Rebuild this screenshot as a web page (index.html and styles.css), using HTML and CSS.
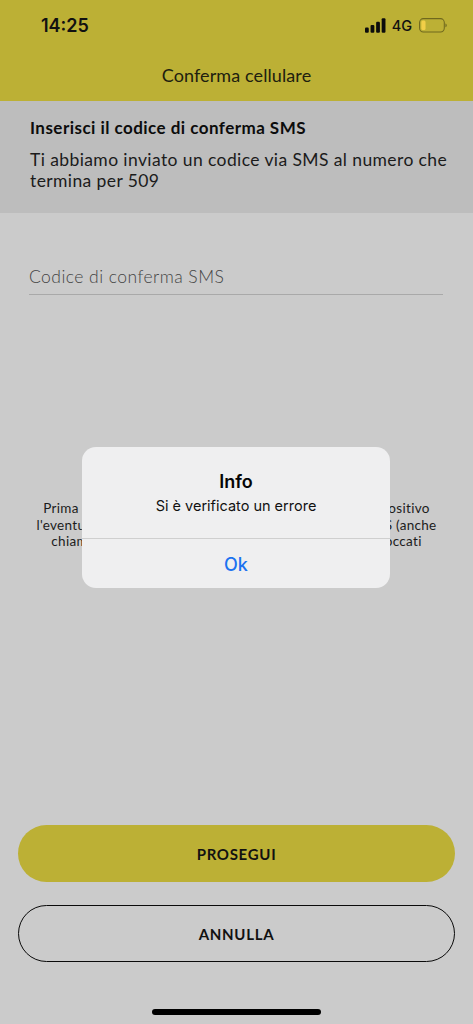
FILE: index.html
```html
<!DOCTYPE html>
<html lang="it">
<head>
<meta charset="utf-8">
<title>Conferma cellulare</title>
<link rel="stylesheet" href="styles.css">
</head>
<body>
<div class="screen">
  <header class="top">
    <div class="status">
      <span class="time">14:25</span>
      <div class="status-right">
        <svg class="signal" width="21" height="15" viewBox="0 0 20 14"><rect x="0" y="9" width="3.6" height="5" rx="1"/><rect x="5.300" y="6.500" width="3.6" height="7.500" rx="1"/><rect x="10.600" y="3.500" width="3.6" height="10.500" rx="1"/><rect x="15.900" y="0" width="3.6" height="14" rx="1"/></svg>
        <span class="net">4G</span>
        <svg class="battery" width="28" height="15" viewBox="0 0 30 15" preserveAspectRatio="none"><rect x="0.600" y="0.600" width="26.500" height="13.400" rx="4" fill="none" stroke="#6f681e" stroke-width="1.100"/><rect x="2.500" y="2.500" width="4.500" height="9.600" rx="1.500" fill="#f2cf48"/><path d="M28.300 5.500c1 .4 1.400 1.100 1.400 1.900s-.4 1.500-1.400 1.900z" fill="#6f681e"/></svg>
      </div>
    </div>
    <h1 class="title">Conferma cellulare</h1>
  </header>

  <section class="intro">
    <h2 class="intro-title">Inserisci il codice di conferma SMS</h2>
    <p class="intro-text">Ti abbiamo inviato un codice via SMS al numero che termina per 509</p>
  </section>

  <div class="field"><span class="placeholder">Codice di conferma SMS</span></div>

  <p class="note">Prima di proseguire controlla sul tuo telefono che il dispositivo<br>l'eventuale ricezione del messaggio di testo fra i tuoi SMS (anche<br>chiamate e messaggi da numeri sconosciuti o anche bloccati</p>

  <div class="actions">
    <button class="btn btn-primary">PROSEGUI</button>
    <button class="btn btn-outline">ANNULLA</button>
  </div>
  <div class="home-wrap"><div class="home"></div></div>

  <div class="dialog">
    <div class="dialog-body">
      <div class="dialog-title">Info</div>
      <div class="dialog-text">Si è verificato un errore</div>
    </div>
    <div class="dialog-action">Ok</div>
  </div>
</div>
</body>
</html>
```
FILE: styles.css
```css
* { box-sizing: border-box; }
html, body { margin: 0; padding: 0; }
body { background: #cbcbcb; font-family: "Lato", "Liberation Sans", sans-serif; color: #111; }
.screen { position: relative; width: 473px; height: 1024px; overflow: hidden; display: flex; flex-direction: column; background: #cbcbcb; }

.top { height: 101px; background: #bcb035; display: flex; flex-direction: column; }
.status { height: 54px; padding: 0 26px 4px 41px; display: flex; align-items: center; justify-content: space-between; }
.time { font-family: "Inter", "Liberation Sans", sans-serif; font-weight: 600; font-size: 18px; color: #111; }
.status-right { display: flex; align-items: center; gap: 6px; }
.signal { fill: #0c0c0c; display: block; }
.net { font-family: "Inter", "Liberation Sans", sans-serif; font-weight: 500; font-size: 14.500px; color: #111; }
.battery { display: block; margin-left: 1px; }
.title { margin: 0; font-weight: 400; font-size: 18px; letter-spacing: 0.1px; text-align: center; line-height: 42px; color: #20200f; }

.intro { height: 112px; background: #bdbdbd; padding: 16px 20px 0 30px; }
.intro-title { margin: 0; font-size: 17px; font-weight: 700; letter-spacing: 0.46px; line-height: 22px; color: #0c0c0c; }
.intro-text { margin: 10px 0 0; font-size: 17.500px; letter-spacing: 0.4px; line-height: 21px; color: #1b1b1b; }

.field { margin: 50px 30px 0 29px; height: 32px; border-bottom: 1px solid #a9a9a9; }
.placeholder { font-size: 17.500px; font-weight: 300; letter-spacing: 0.45px; line-height: 28px; color: #444; display: block; }

.note { margin: 205px 0 0; font-size: 13.500px; letter-spacing: 0.3px; line-height: 16.500px; text-align: center; color: #1c1c1c; }

.actions { margin-top: auto; padding: 0 18px; display: flex; flex-direction: column; gap: 23px; }
.btn { height: 57px; width: 100%; border-radius: 29px; font-family: inherit; font-size: 15px; font-weight: 700; letter-spacing: 0.7px; color: #111; display: block; }
.btn-primary { background: #bcb035; border: 0; }
.btn-outline { background: transparent; border: 1.500px solid #0a0a0a; }

.home-wrap { height: 62px; display: flex; justify-content: center; align-items: flex-end; padding-bottom: 9px; }
.home { width: 169px; height: 6px; border-radius: 3px; background: #000; }

.dialog { position: absolute; left: 82px; top: 447px; width: 308px; height: 141px; border-radius: 14px; background: #efeff0; display: flex; flex-direction: column; text-align: center; font-family: "Inter", "Liberation Sans", sans-serif; }
.dialog-body { height: 92px; padding-top: 23px; border-bottom: 1px solid #cfcfcf; }
.dialog-title { font-size: 18px; font-weight: 600; line-height: 24px; color: #050505; }
.dialog-text { font-size: 14.500px; line-height: 20px; margin-top: 2px; color: #111; }
.dialog-action { flex: 1; display: flex; align-items: center; justify-content: center; padding-top: 2px; font-size: 18px; font-weight: 500; color: #1b72f0; }
```
